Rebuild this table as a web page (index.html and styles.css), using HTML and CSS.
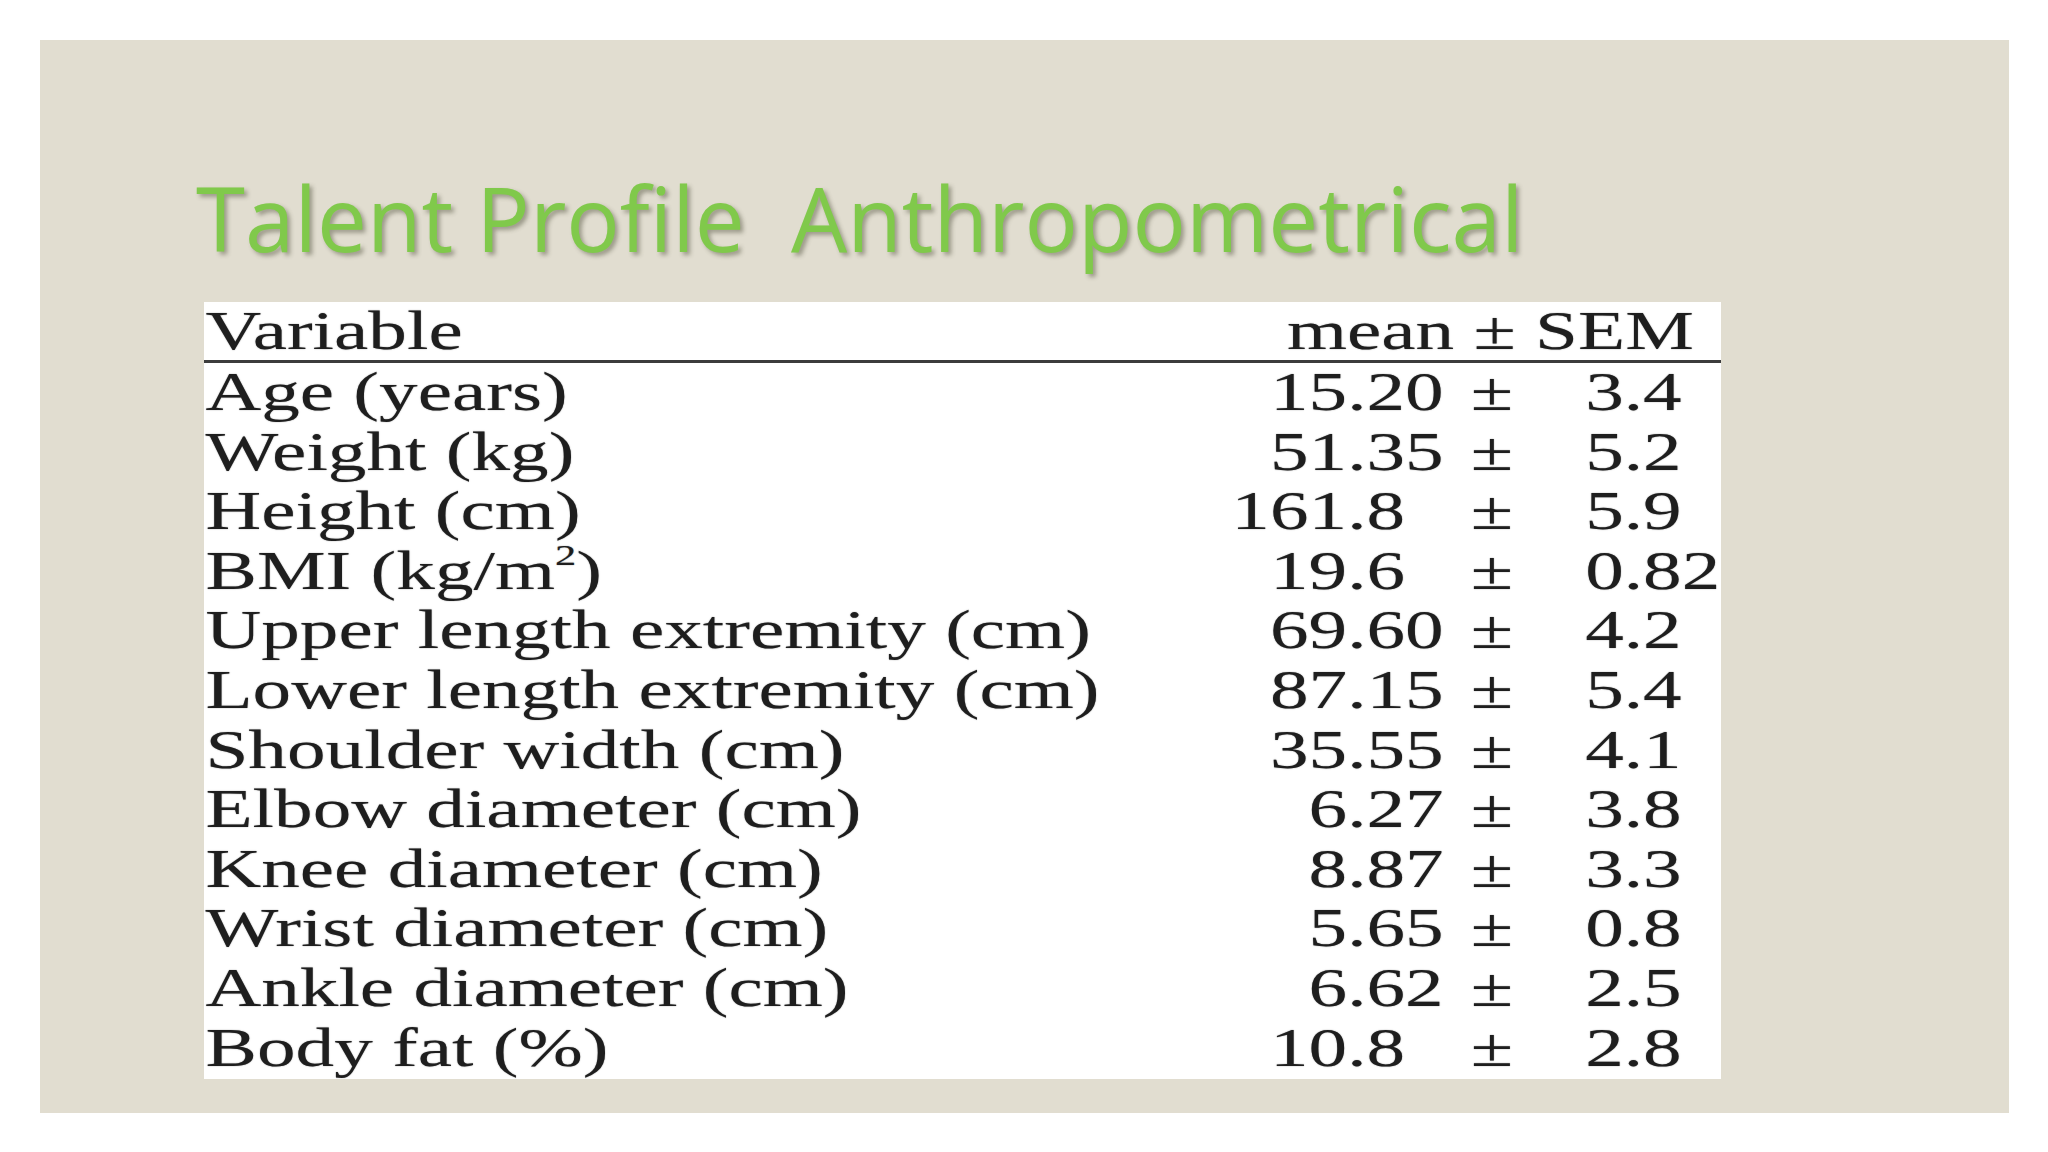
FILE: index.html
```html
<!DOCTYPE html>
<html lang="en">
<head>
<meta charset="utf-8">
<title>Talent Profile Anthropometrical</title>
<link rel="stylesheet" href="styles.css">
</head>
<body>
<section class="slide">
  <h1 class="title">Talent Profile  Anthropometrical</h1>
  <div class="figure">
    <div class="stat-table">
      <div class="head"><span class="var">Variable</span><span class="hstat">mean ± SEM</span></div>
      <div class="row"><span class="name">Age (years)</span><span class="mean">15.20</span><span class="pm">±</span><span class="sem">3.4</span></div>
      <div class="row"><span class="name">Weight (kg)</span><span class="mean">51.35</span><span class="pm">±</span><span class="sem">5.2</span></div>
      <div class="row"><span class="name">Height (cm)</span><span class="mean short">161.8</span><span class="pm">±</span><span class="sem">5.9</span></div>
      <div class="row"><span class="name">BMI (kg/m<sup>2</sup>)</span><span class="mean short">19.6</span><span class="pm">±</span><span class="sem">0.82</span></div>
      <div class="row"><span class="name">Upper length extremity (cm)</span><span class="mean">69.60</span><span class="pm">±</span><span class="sem">4.2</span></div>
      <div class="row"><span class="name">Lower length extremity (cm)</span><span class="mean">87.15</span><span class="pm">±</span><span class="sem">5.4</span></div>
      <div class="row"><span class="name">Shoulder width (cm)</span><span class="mean">35.55</span><span class="pm">±</span><span class="sem">4.1</span></div>
      <div class="row"><span class="name">Elbow diameter (cm)</span><span class="mean">6.27</span><span class="pm">±</span><span class="sem">3.8</span></div>
      <div class="row"><span class="name">Knee diameter (cm)</span><span class="mean">8.87</span><span class="pm">±</span><span class="sem">3.3</span></div>
      <div class="row"><span class="name">Wrist diameter (cm)</span><span class="mean">5.65</span><span class="pm">±</span><span class="sem">0.8</span></div>
      <div class="row"><span class="name">Ankle diameter (cm)</span><span class="mean">6.62</span><span class="pm">±</span><span class="sem">2.5</span></div>
      <div class="row"><span class="name">Body fat (%)</span><span class="mean short">10.8</span><span class="pm">±</span><span class="sem">2.8</span></div>
    </div>
  </div>
</section>
</body>
</html>
```
FILE: styles.css
```css
* {
  box-sizing: border-box;
}

html,
body {
  margin: 0;
  padding: 0;
  background: #ffffff;
}

.slide {
  margin: 40px 0 0 40px;
  width: 1969px;
  height: 1073px;
  background: #e1ddd0;
  padding: 133px 0 0 156px;
  overflow: hidden;
}

.title {
  margin: 0;
  font-family: "Open Sans", "Noto Sans", sans-serif;
  font-weight: 400;
  font-size: 89px;
  line-height: 1;
  color: #80c94b;
  text-shadow: 3px 3px 4px rgba(70, 70, 50, 0.45);
  white-space: pre;
}

.figure {
  margin: 40px 0 0 8px;
  width: 1517px;
  height: 777px;
  background: #ffffff;
  overflow: hidden;
}

.stat-table {
  width: 1061px;
  transform: scaleX(1.4298);
  transform-origin: 0 0;
  font-family: "Liberation Serif", "Times New Roman", serif;
  font-size: 54px;
  color: #1e1e1e;
  text-shadow: 0 0 1px rgba(0, 0, 0, 0.55);
  white-space: nowrap;
}

.head {
  display: flex;
  justify-content: space-between;
  line-height: 58px;
  padding: 0 19px 0 1px;
  border-bottom: 3px solid #3c3c3c;
}

.row {
  display: grid;
  grid-template-columns: 699px 168px 99px 1fr;
  line-height: 59.6px;
}

.name {
  padding-left: 1px;
}

.name sup {
  font-size: 0.55em;
  line-height: 0;
  vertical-align: 0.8em;
}

.mean {
  text-align: right;
}

.mean.short {
  padding-right: 27px;
}

.pm {
  padding-left: 19px;
}
```
